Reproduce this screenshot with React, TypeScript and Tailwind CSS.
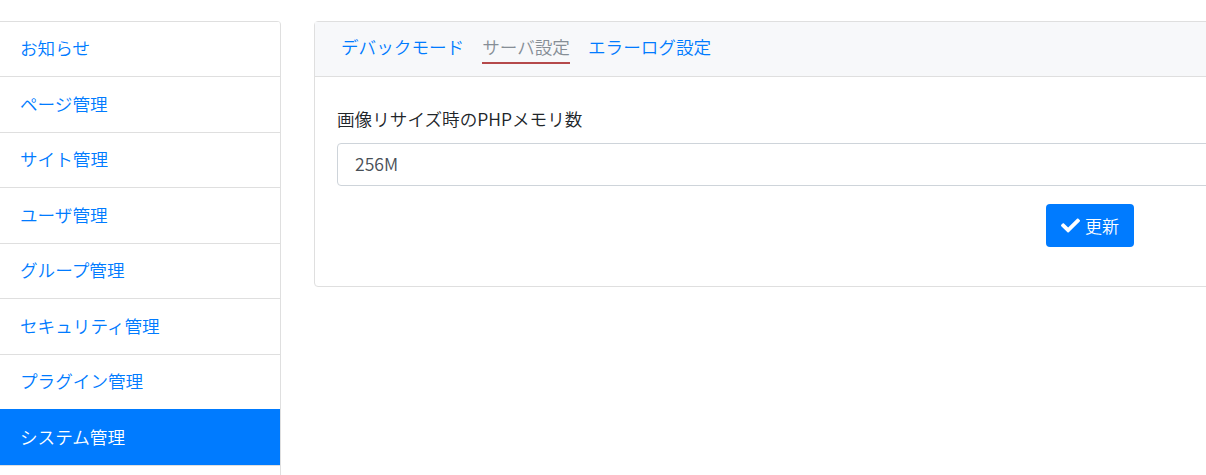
const menu = [
  { label: 'お知らせ', h: 'h-[55px]' },
  { label: 'ページ管理', h: 'h-[56px]' },
  { label: 'サイト管理', h: 'h-[55px]' },
  { label: 'ユーザ管理', h: 'h-[56px]' },
  { label: 'グループ管理', h: 'h-[55px]' },
  { label: 'セキュリティ管理', h: 'h-[56px]' },
  { label: 'プラグイン管理', h: 'h-[55px]' },
  { label: 'システム管理', h: 'h-[56px]', active: true },
  { label: '', h: 'h-[56px]' },
];

const tabs = [
  { label: 'デバックモード' },
  { label: 'サーバ設定', active: true },
  { label: 'エラーログ設定' },
];

// FontAwesome-style check
const CheckIcon = () => (
  <svg viewBox="0 0 512 512" className="h-[19px] w-[19px]" fill="currentColor">
    <path d="M173.9 439.4l-166.4-166.4c-10-10-10-26.2 0-36.2l36.2-36.2c10-10 26.2-10 36.2 0L192 312.7 432.1 72.6c10-10 26.2-10 36.2 0l36.2 36.2c10 10 10 26.2 0 36.2l-294.4 294.4c-10 10-26.2 10-36.2 0z" />
  </svg>
);

export default function App() {
  return (
    <div
      className="h-[475px] w-[1206px] overflow-hidden bg-white text-[17.6px] font-[350]"
      style={{ fontFamily: '"Noto Sans CJK JP", "Noto Sans", sans-serif' }}
    >
      <div className="flex items-start pt-[21px]">
        {/* sidebar list */}
        <div className="-ml-px w-[282px] shrink-0 overflow-hidden rounded-tr-[4px] border-r border-[#dfdfdf]">
          {menu.map((m, i) => (
            <div
              key={i}
              className={`flex items-center border-t pb-[2px] pl-[21px] leading-[26px] ${m.h} ${
                m.active ? 'border-[#007bff] bg-[#007bff] text-white' : 'border-[#dfdfdf] text-[#007bff]'
              }`}
            >
              {m.label}
            </div>
          ))}
        </div>

        {/* main card */}
        <div className="ml-[33px] w-[1552px] shrink-0 rounded-[4px] border border-[#dfdfdf]">
          <div className="flex h-[55px] items-start gap-[18px] border-b border-[#dfdfdf] bg-[#f7f8fa] pl-[26px] pt-[14px]">
            {tabs.map(t => (
              <span
                key={t.label}
                className={`border-b-2 pb-1 leading-[22px] ${
                  t.active ? 'border-[#b5494b] text-[#868e96]' : 'border-transparent text-[#007bff]'
                }`}
              >
                {t.label}
              </span>
            ))}
          </div>
          <div className="px-[22px] pb-[39px] pt-[29px]">
            <div className="mb-[11px] leading-[26px] text-[#212529]">画像リサイズ時のPHPメモリ数</div>
            <div className="flex h-[43px] items-center rounded-[4px] border border-[#ced4da] pl-[17px] text-[#495057]">
              256M
            </div>
            <div className="mt-[18px] flex justify-center">
              <button className="flex h-[43px] items-center gap-[5px] rounded-[4px] bg-[#007bff] px-[15px] text-[17px] text-white">
                <CheckIcon />
                <span>更新</span>
              </button>
            </div>
          </div>
        </div>
      </div>
    </div>
  );
}
